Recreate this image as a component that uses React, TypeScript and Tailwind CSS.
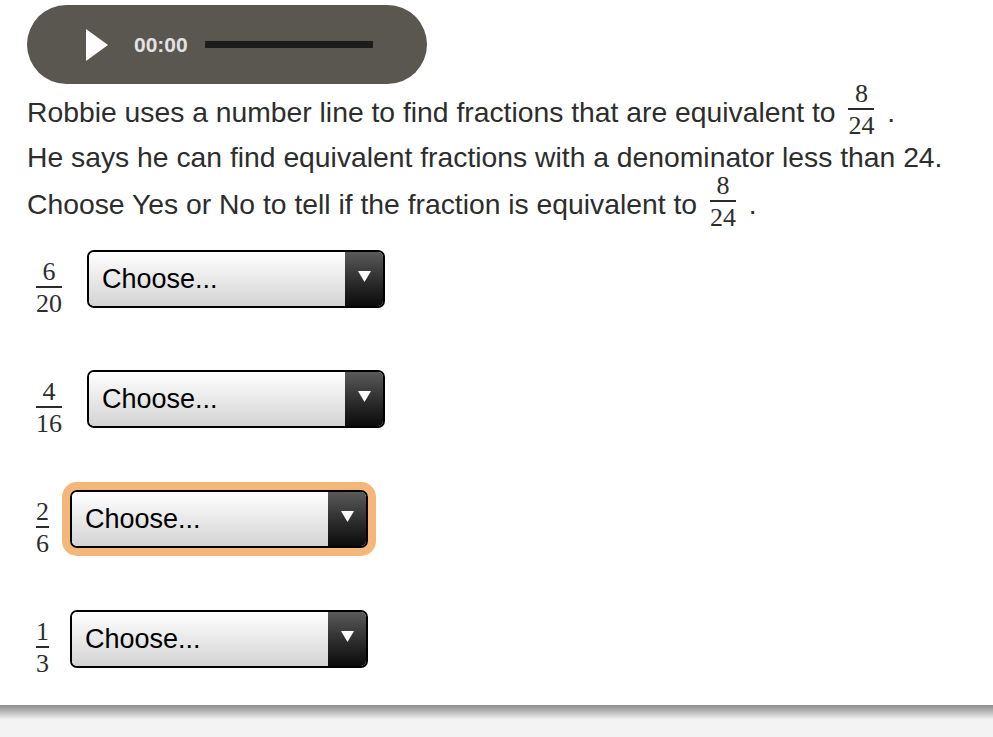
import React from 'react';

function Frac({ n, d }: { n: string; d: string }) {
  return (
    <span
      className="inline-block align-[-12px] px-[5px] text-center text-[26px] text-[#2d2d2d]"
      style={{ fontFamily: '"Liberation Serif", serif' }}
    >
      <span className="block leading-[25px]">{n}</span>
      <span className="block mt-[2px] h-[2px] bg-[#2d2d2d]"></span>
      <span className="block mt-[3px] leading-[25px]">{d}</span>
    </span>
  );
}

function Select({ focused }: { focused?: boolean }) {
  return (
    <div
      className={
        'flex h-[58px] w-[298px] shrink-0 overflow-hidden rounded-[7px] border-2 border-black ' +
        (focused ? 'shadow-[0_0_0_8px_#f5b679]' : '')
      }
    >
      <div className="flex flex-1 items-center bg-gradient-to-b from-white to-[#d3d3d3] pl-[13px] text-[27px] text-black">
        Choose...
      </div>
      <div className="flex w-[38px] justify-center bg-gradient-to-b from-[#5a5a5a] to-[#0c0c0c] pt-[19px]">
        <svg width="13" height="11" viewBox="0 0 13 11">
          <polygon points="0,0 13,0 6.5,11" fill="#ffffff" />
        </svg>
      </div>
    </div>
  );
}

function Row({ n, d, focused }: { n: string; d: string; focused?: boolean }) {
  return (
    <div className={'flex h-[58px] items-start pl-[4px] ' + (d.length > 1 ? 'gap-[20px]' : 'gap-[16px]')}>
      <div className="mt-[9px]">
        <Frac n={n} d={d} />
      </div>
      <Select focused={focused} />
    </div>
  );
}

export default function App() {
  return (
    <div
      className="min-h-screen bg-[#f3f3f3]"
      style={{ fontFamily: '"Liberation Sans", Arial, sans-serif' }}
    >
      <div className="h-[705px] bg-white px-[27px] pt-[5px]">
        <div className="flex h-[79px] w-[400px] items-center rounded-full bg-[#5a5750] pl-[59px]">
          <svg width="22" height="32" viewBox="0 0 22 32">
            <polygon points="0,0 22,16 0,32" fill="#ffffff" />
          </svg>
          <span className="ml-[26px] text-[21px] font-bold text-[#e2e2e2]">00:00</span>
          <div className="ml-[17px] h-[7px] w-[168px] bg-[#1c1c1c]"></div>
        </div>

        <div className="text-[28.3px] text-[#2d2d2d]">
          <div className="mt-[-3px] leading-[46px]">
            Robbie uses a number line to find fractions that are equivalent to <Frac n="8" d="24" /> .
          </div>
          <div className="mt-[2px] leading-[34px]">
            He says he can find equivalent fractions with a denominator less than 24.
          </div>
          <div className="mt-[-1px] leading-[46px]">
            Choose Yes or No to tell if the fraction is equivalent to <Frac n="8" d="24" /> .
          </div>
        </div>

        <div className="mt-[20px] flex flex-col gap-[62px]">
          <Row n="6" d="20" />
          <Row n="4" d="16" />
          <Row n="2" d="6" focused />
          <Row n="1" d="3" />
        </div>
      </div>
      <div className="h-[14px] bg-gradient-to-b from-[#8a8a8a] to-[#f0f0f0]"></div>
    </div>
  );
}
